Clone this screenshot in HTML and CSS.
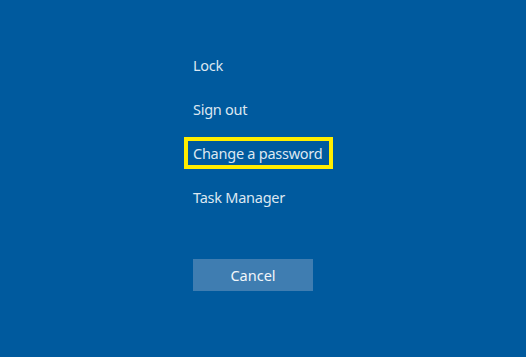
FILE: index.html
```html
<!DOCTYPE html>
<html lang="en">
<head>
    <meta charset="UTF-8">
    <title>Security options</title>
    <link rel="stylesheet" href="styles.css">
</head>
<body>
    <div class="screen">
        <ul class="options">
            <li class="option">Lock</li>
            <li class="option">Sign out</li>
            <li class="option selected">Change a password</li>
            <li class="option">Task Manager</li>
        </ul>
        <button class="btn-cancel">Cancel</button>
    </div>
</body>
</html>
```
FILE: styles.css
```css
html, body {
    margin: 0;
    padding: 0;
    height: 100%;
}

body {
    background: #005a9e;
    font-family: "Noto Sans", "Open Sans", sans-serif;
    color: #dce7f1;
}

.screen {
    padding: 49px 0 0 184px;
    display: flex;
    flex-direction: column;
    align-items: flex-start;
}

.options {
    list-style: none;
    margin: 0;
    padding: 0;
    display: flex;
    flex-direction: column;
    gap: 12px;
}

.option {
    font-size: 14.5px;
    letter-spacing: -0.25px;
    height: 24px;
    line-height: 24px;
    padding: 0 7px 0 5px;
    border: 4px solid transparent;
    white-space: nowrap;
}

.option.selected {
    border-color: #ffee00;
}

.btn-cancel {
    margin: 46px 0 0 9px;
    width: 120px;
    height: 32px;
    border: none;
    background: #3f7db1;
    color: #f2f6fa;
    font-family: inherit;
    font-size: 14.5px;
    padding: 0;
}
```
